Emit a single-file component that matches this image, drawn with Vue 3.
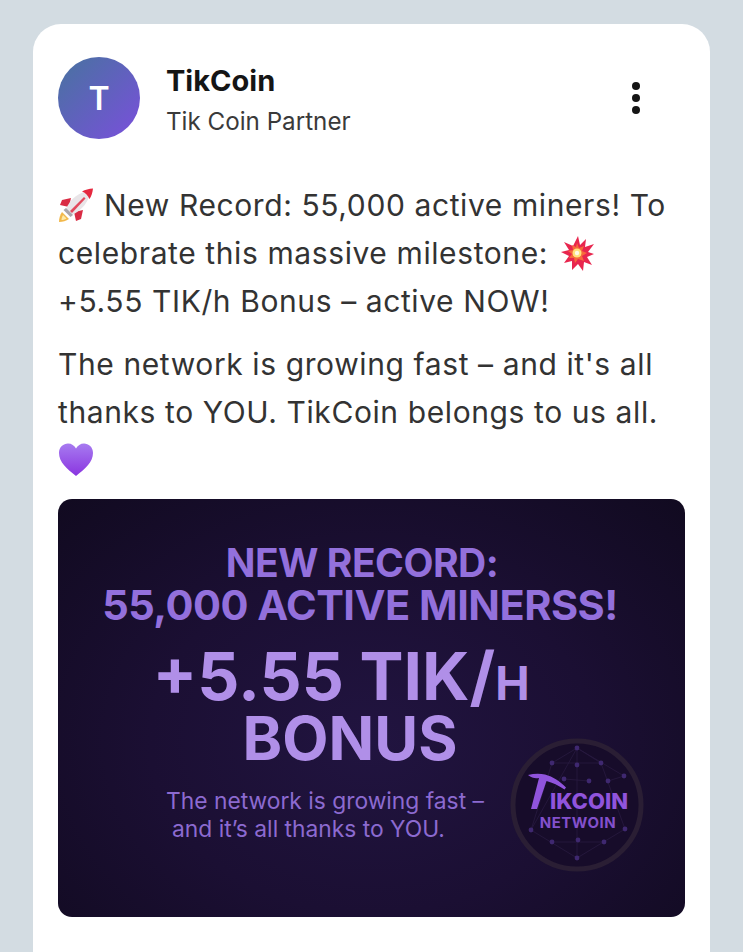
<script setup>
const nodes = [
  [87, 26], [62, 41], [87, 43], [111, 41], [74, 57], [99, 59], [118, 59], [134, 54],
  [41, 108], [62, 120], [88, 118], [114, 120], [135, 107], [87, 136]
]
const links = [
  [87, 26, 62, 41], [87, 26, 111, 41], [87, 26, 87, 136], [62, 41, 41, 108], [111, 41, 135, 107],
  [62, 41, 111, 41], [41, 108, 87, 136], [135, 107, 87, 136], [62, 120, 114, 120], [74, 57, 99, 59],
  [118, 59, 134, 54], [87, 26, 134, 54], [87, 26, 41, 108]
]
</script>

<template>
  <div class="page">
    <div class="card">
      <!-- Cabecalho -->
      <div class="header">
        <div class="avatar">T</div>
        <div class="who">
          <div class="name">TikCoin</div>
          <div class="role">Tik Coin Partner</div>
        </div>
        <div class="more">
          <span></span>
          <span></span>
          <span></span>
        </div>
      </div>

      <!-- Texto do post -->
      <p class="text">
        <svg class="emoji rocket" viewBox="0 0 36 36">
          <path d="M4 25c-2 3-3 6-3 10 4 0 7-1 10-3z" fill="#f2b84b" />
          <path d="M5 28c-1 2-1.500 3.500-1.500 5 1.500 0 3-.5 5-1.500z" fill="#fde9a8" />
          <path d="M13 11l-9 2-2 5 9 2z" fill="#d92b43" />
          <path d="M25 23l-2 9-5 2-2-9z" fill="#d92b43" />
          <path d="M8 22C12 12 21 5 33 3c-2 12-9 20-19 25z" fill="#e9e5e8" />
          <path d="M24 4.500c3 1 6 4 7.500 7.500C33.500 9 34.500 5.500 35 1.500c-4 .2-8 1.200-11 3z" fill="#e5283f" />
          <path d="M12 24L26 10l1.500 1.500L14 26z" fill="#e2495c" />
          <path d="M8 21l7 7-2.500 2-7-7z" fill="#a9a5ac" />
        </svg>
        New Record: 55,000 active miners! To<br />
        celebrate this massive milestone:
        <svg class="emoji boom" viewBox="0 0 36 36">
          <path d="M19 1l2 9 6-6-1 8 9-3-6 8 6 2-7 3 5 8-8-3-1 9-5-7-6 6 0-9-8 2 5-7-8-4 8-2-5-8 9 4z" fill="#e8264e" />
          <path d="M18 8l2 5 5-2-2 5 5 2-5 3 2 5-6-2-3 4-1-5-5 0 3-4-4-3 5-1-1-5 4 2z" fill="#f76a3c" />
          <circle cx="18" cy="18" r="4.500" fill="#ffe27a" />
          <circle cx="18" cy="18" r="2.200" fill="#fffbe6" />
        </svg><br />
        +5.55 TIK/h Bonus – active NOW!
      </p>
      <p class="text second">
        The network is growing fast – and it's all<br />
        thanks to YOU. TikCoin belongs to us all.<br />
        <svg class="emoji heart" viewBox="0 0 36 36">
          <defs>
            <linearGradient id="heartFill" x1="0" y1="0" x2="0" y2="1">
              <stop offset="0" stop-color="#a77bf0" />
              <stop offset="1" stop-color="#8a35e0" />
            </linearGradient>
          </defs>
          <path d="M18 34C9 27 1 20 1 11 1 5 5.500 1.500 10 1.500c3.500 0 6.500 2 8 5 1.500-3 4.500-5 8-5 4.500 0 9 3.500 9 9.500 0 9-8 16-17 23z" fill="url(#heartFill)" />
        </svg>
      </p>

      <!-- Imagem do post -->
      <div class="banner">
        <div class="head">NEW RECORD:</div>
        <div class="head wide">55,000 ACTIVE MINERSS!</div>
        <div class="bonus first">+5.55 TIK/<small>H</small></div>
        <div class="bonus last">BONUS</div>
        <div class="sub">The network is growing fast –</div>
        <div class="sub indent">and it’s all thanks to YOU.</div>

        <svg class="logo" viewBox="0 0 175 170">
          <circle cx="87" cy="83" r="62" fill="#170c2a" />
          <circle cx="87" cy="83" r="64" fill="none" stroke="#2a1e34" stroke-width="5" />
          <line
            v-for="(l, i) in links"
            :key="'l' + i"
            :x1="l[0]"
            :y1="l[1]"
            :x2="l[2]"
            :y2="l[3]"
            stroke="#281a40"
            stroke-width="0.8"
          />
          <circle
            v-for="(n, i) in nodes"
            :key="'n' + i"
            :cx="n[0]"
            :cy="n[1]"
            r="2.400"
            fill="#3f2870"
          />
          <path d="M38 53c6-1.500 12-1.500 17-.5 8 2 15 7 21 13l-1.500 2c-6-4-12-7-18-8.500L47 87h-6l8-31c-4 .5-7 .2-11-3z" fill="#9054dc" />
          <text x="60" y="87" class="logo-title">IKCOIN</text>
          <text x="88" y="106" text-anchor="middle" class="logo-sub">NETWOIN</text>
        </svg>
      </div>
    </div>
  </div>
</template>

<style>
html,
body {
  margin: 0;
  background: #d3dce2;
}
</style>

<style scoped>
.page {
  height: 952px;
  box-sizing: border-box;
  padding: 24px 33px 0;
  overflow: hidden;
  background: #d3dce2;
  font-family: Inter, "Liberation Sans", sans-serif;
}

.card {
  height: 100%;
  box-sizing: border-box;
  padding: 33px 25px 0;
  background: #ffffff;
  border-radius: 28px 28px 0 0;
}

.header {
  display: flex;
  align-items: flex-start;
}

.avatar {
  width: 82px;
  height: 82px;
  border-radius: 50%;
  display: flex;
  align-items: center;
  justify-content: center;
  background: linear-gradient(135deg, #47739f, #7a4fdc);
  color: #ffffff;
  font-size: 32px;
  font-weight: 600;
}

.who {
  flex: 1;
  margin-left: 26px;
  padding-top: 7px;
}

.name {
  font-size: 29px;
  line-height: 34px;
  font-weight: 700;
  color: #151515;
}

.role {
  margin-top: 9px;
  font-size: 24.200px;
  line-height: 30px;
  color: #3a3a3a;
}

.more {
  display: flex;
  flex-direction: column;
  gap: 4px;
  margin: 25px 45px 0 0;
}

.more span {
  width: 8px;
  height: 8px;
  border-radius: 50%;
  background: #151515;
}

.text {
  margin: 42px 0 0;
  font-size: 30px;
  line-height: 48px;
  letter-spacing: 0.6px;
  color: #333333;
}

.second {
  margin-top: 15px;
}

.emoji {
  width: 36px;
  height: 36px;
  vertical-align: -7px;
}

.rocket {
  margin-right: 1px;
}

.boom {
  margin-left: 2px;
}

.banner {
  position: relative;
  height: 418px;
  margin-top: 15px;
  padding-top: 43px;
  box-sizing: border-box;
  border-radius: 14px;
  display: flex;
  flex-direction: column;
  align-items: center;
  background: radial-gradient(ellipse at 50% 58%, #211440 0%, #1b0f33 50%, #110a20 100%);
  white-space: nowrap;
}

.head {
  margin-left: -19px;
  font-size: 39px;
  line-height: 42px;
  font-weight: 700;
  letter-spacing: -0.5px;
  color: #9370dc;
}

.wide {
  margin-left: -23px;
  font-size: 41.500px;
}

.bonus {
  font-size: 66px;
  font-weight: 700;
  color: #b08fe8;
}

.bonus small {
  font-size: 46px;
}

.first {
  margin: 21px 0 0 -61px;
  line-height: 58px;
}

.last {
  margin: -2px 0 0 -43px;
  font-size: 60px;
  line-height: 56px;
}

.sub {
  margin: 21px 0 0 -93px;
  font-size: 22.800px;
  line-height: 28px;
  color: #8c6ad0;
}

.indent {
  margin: 0 0 0 -126px;
}

.logo {
  position: absolute;
  left: 432px;
  top: 223px;
  width: 175px;
  height: 170px;
}

.logo-title {
  font-family: Inter, "Liberation Sans", sans-serif;
  font-size: 22px;
  font-weight: 800;
  fill: #9054dc;
}

.logo-sub {
  font-family: Inter, "Liberation Sans", sans-serif;
  font-size: 15px;
  font-weight: 700;
  letter-spacing: 0.5px;
  fill: #8350cc;
}
</style>
